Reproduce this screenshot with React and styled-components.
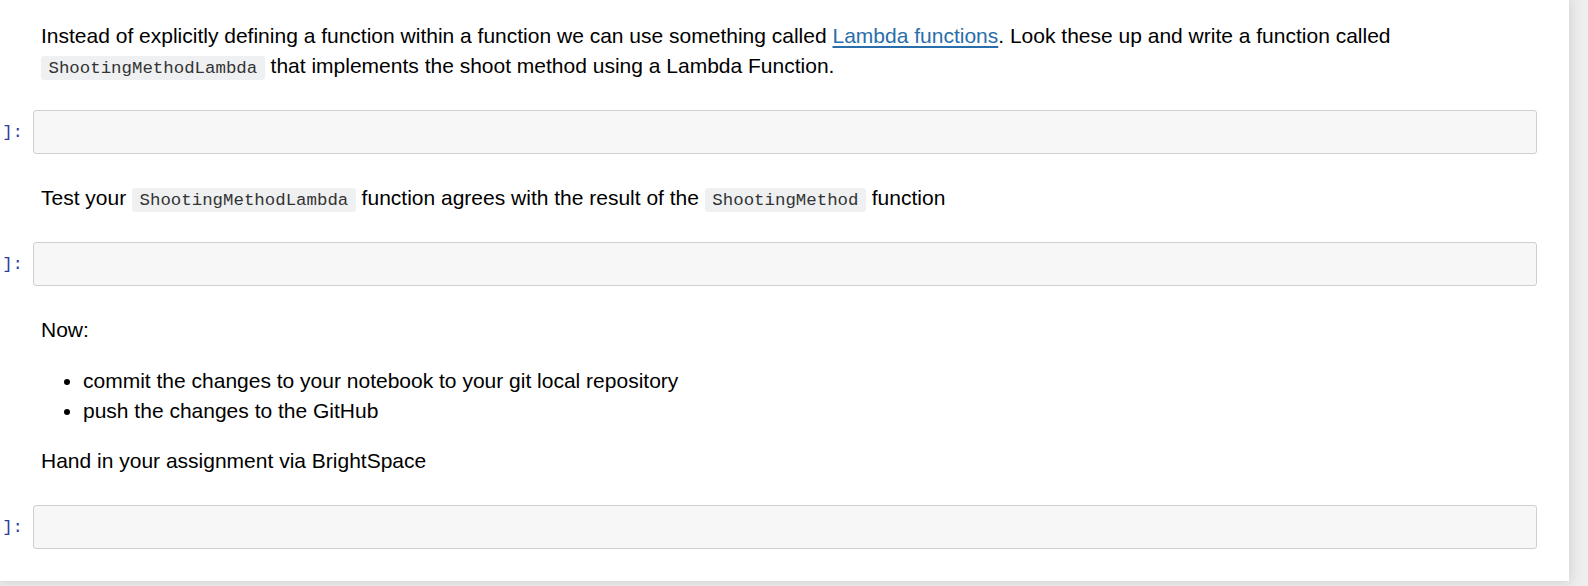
import React from "react";
import styled, { createGlobalStyle } from "styled-components";

const GlobalStyle = createGlobalStyle`
    html, body {
        margin: 0;
        padding: 0;
        background: #eeeeee;
        overflow: hidden;
    }
`

const Page = styled.div`
    width: 1588px;
    height: 586px;
    background: #eeeeee;
    overflow: hidden;
`

const Notebook = styled.div`
    width: 1569px;
    height: 581px;
    box-sizing: border-box;
    background: #ffffff;
    box-shadow: 0 0 12px 1px rgba(87, 87, 87, 0.2);
    padding: 21px 0 0 0;
    display: flex;
    flex-direction: column;
    gap: 29px;
`

const TextCell = styled.div`
    padding-left: 41px;
    padding-right: 32px;
    font-family: "Liberation Sans", Arial, sans-serif;
    font-size: 21px;
    line-height: 30px;
    color: #000000;
`

const Para = styled.p`
    margin: 0;
    ul + & {
        margin-top: 20px;
    }
`

const List = styled.ul`
    margin: 21px 0 0 0;
    padding-left: 42px;
    list-style: disc;
`

const Link = styled.a`
    color: #296eaa;
    text-decoration: underline;
    text-underline-offset: 3px;
`

const Code = styled.code`
    font-family: "Liberation Mono", "Courier New", monospace;
    font-size: 17.4px;
    line-height: 1;
    color: #333333;
    background: #eff0f1;
    border-radius: 3px;
    padding: 3px 7.5px 2px;
`

const CodeCell = styled.div`
    display: flex;
    align-items: stretch;
`

const Prompt = styled.div`
    width: 33px;
    flex: none;
    box-sizing: border-box;
    padding-right: 10px;
    display: flex;
    justify-content: flex-end;
    align-items: center;
    white-space: nowrap;
    font-family: "Liberation Mono", "Courier New", monospace;
    font-size: 17.4px;
    color: #303f9f;
`

const InputArea = styled.div`
    width: 1504px;
    height: 44px;
    box-sizing: border-box;
    background: #f7f7f7;
    border: 1px solid #cfcfcf;
    border-radius: 3px;
`

const Cell = () => (
    <CodeCell>
        <Prompt>]:</Prompt>
        <InputArea />
    </CodeCell>
)

export default function App() {
    return (
        <Page>
            <GlobalStyle />
            <Notebook>
                <TextCell>
                    <Para>
                        Instead of explicitly defining a function within a function we can use something called{" "}
                        <Link href="#">Lambda functions</Link>. Look these up and write a function called{" "}
                        <Code>ShootingMethodLambda</Code> that implements the shoot method using a Lambda Function.
                    </Para>
                </TextCell>
                <Cell />
                <TextCell>
                    <Para>
                        Test your <Code>ShootingMethodLambda</Code> function agrees with the result of the{" "}
                        <Code>ShootingMethod</Code> function
                    </Para>
                </TextCell>
                <Cell />
                <TextCell>
                    <Para>Now:</Para>
                    <List>
                        <li>commit the changes to your notebook to your git local repository</li>
                        <li>push the changes to the GitHub</li>
                    </List>
                    <Para>Hand in your assignment via BrightSpace</Para>
                </TextCell>
                <Cell />
            </Notebook>
        </Page>
    );
}
